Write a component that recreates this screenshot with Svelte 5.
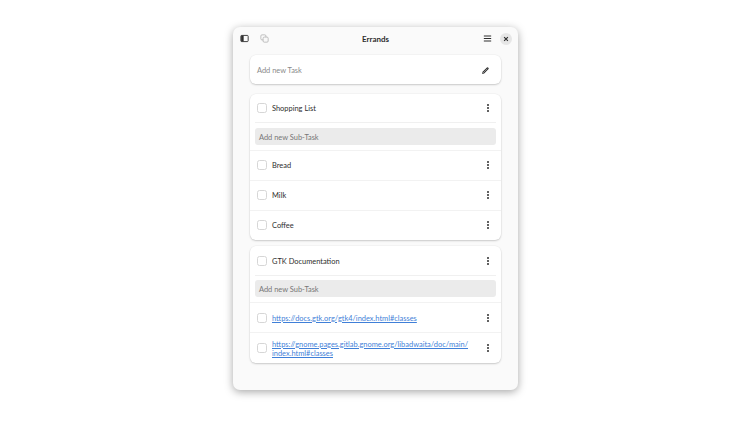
<script>
  const tasks = [
    {
      title: 'Shopping List',
      subs: [{ text: 'Bread' }, { text: 'Milk' }, { text: 'Coffee' }]
    },
    {
      title: 'GTK Documentation',
      subs: [
        { text: 'https://docs.gtk.org/gtk4/index.html#classes', link: true },
        { text: 'https://gnome.pages.gitlab.gnome.org/libadwaita/doc/main/ index.html#classes', link: true, tall: true }
      ]
    }
  ];
</script>

<div class="page">
  <div class="window">
    <header>
      <div class="group">
        <svg class="icon" viewBox="0 0 16 16">
          <rect x="1.5" y="2.5" width="13" height="11" rx="1.5" fill="none" stroke="#2e2e2e" stroke-width="1.6" />
          <rect x="2" y="3" width="4.5" height="10" fill="#2e2e2e" />
        </svg>
        <svg class="icon dim" viewBox="0 0 16 16">
          <rect x="1.5" y="1.5" width="9" height="9" rx="2" fill="none" stroke="#2e2e2e" stroke-width="1.4" />
          <rect x="5.5" y="5.5" width="9" height="9" rx="2" fill="#f6f6f6" stroke="#2e2e2e" stroke-width="1.4" />
        </svg>
      </div>
      <div class="title">Errands</div>
      <div class="group right">
        <svg class="icon" viewBox="0 0 16 16">
          <path d="M1.5 3.5h13M1.5 8h13M1.5 12.5h13" stroke="#2e2e2e" stroke-width="1.8" fill="none" />
        </svg>
        <div class="close">
          <svg viewBox="0 0 8 8"><path d="M1.5 1.5l5 5M6.5 1.5l-5 5" stroke="#2e2e2e" stroke-width="1.5" fill="none" /></svg>
        </div>
      </div>
    </header>

    <main>
      <div class="card new-task">
        <span class="placeholder">Add new Task</span>
        <svg class="icon" viewBox="0 0 16 16">
          <path d="M2 14l.8-3.6L10.6 2.6a1.3 1.3 0 0 1 1.8 0l1 1a1.3 1.3 0 0 1 0 1.8L5.6 13.2z" fill="#2e2e2e" />
          <path d="M3.6 12.4l7.6-7.6" stroke="#fff" stroke-width=".8" />
        </svg>
      </div>

      {#each tasks as task, i}
        <div class="card" class:first={i === 0} class:second={i === 1}>
          <div class="row top">
            <span class="check"></span>
            <span class="label">{task.title}</span>
            <span class="dots"><i></i><i></i><i></i></span>
          </div>
          <div class="entry-wrap">
            <div class="entry">Add new Sub-Task</div>
          </div>
          {#each task.subs as sub}
            <div class="row sub" class:tall={sub.tall}>
              <span class="check"></span>
              <span class="label" class:link={sub.link}>{sub.text}</span>
              <span class="dots"><i></i><i></i><i></i></span>
            </div>
          {/each}
        </div>
      {/each}
    </main>
  </div>
</div>

<style>
  :global(body) {
    margin: 0;
    background: #fff;
  }

  .page {
    padding: 27px 0 33px 233px;
    font-family: Lato, 'Noto Sans', sans-serif;
    font-size: 7.45px;
    color: #2e2e2e;
  }

  .window {
    width: 285px;
    height: 363px;
    box-sizing: border-box;
    background: #fafafa;
    border-radius: 7px;
    box-shadow: 0 2px 9px rgba(0, 0, 0, 0.35);
  }

  header {
    height: 23px;
    display: flex;
    align-items: center;
    justify-content: space-between;
    padding: 0 6px 0 7px;
  }

  .group {
    display: flex;
    align-items: center;
    gap: 11px;
  }

  .right {
    gap: 8px;
  }

  .title {
    font-weight: 700;
    font-size: 8px;
    margin-right: 1px;
  }

  .icon {
    width: 9px;
    height: 9px;
    flex: none;
  }

  .dim {
    opacity: 0.35;
  }

  .close {
    width: 12px;
    height: 12px;
    border-radius: 50%;
    background: #e6e6e6;
    display: flex;
    align-items: center;
    justify-content: center;
  }

  .close svg {
    width: 6px;
    height: 6px;
  }

  main {
    padding: 5px 17px 0;
    display: flex;
    flex-direction: column;
    gap: 10px;
  }

  .card {
    background: #fff;
    border-radius: 6px;
    box-shadow: 0 0 0 0.5px rgba(0, 0, 0, 0.04), 0 1px 2px rgba(0, 0, 0, 0.18);
  }

  .second {
    margin-top: -4px;
  }

  .new-task {
    height: 29px;
    display: flex;
    align-items: center;
    justify-content: space-between;
    padding: 1px 11px 0 7px;
    box-sizing: border-box;
  }

  .placeholder {
    color: #8a8a8a;
  }

  .row {
    display: flex;
    align-items: center;
    padding: 0 9px 0 7px;
    box-sizing: border-box;
  }

  .top {
    height: 28px;
  }

  .second .top {
    height: 29px;
  }

  .sub {
    height: 30px;
    border-top: 1px solid #f2f2f2;
  }

  .first .sub {
    padding-bottom: 1px;
  }

  .tall {
    height: 31px;
  }

  .check {
    width: 8px;
    height: 8px;
    border: 1px solid #d6d6d6;
    border-radius: 2.5px;
    flex: none;
  }

  .label {
    flex: 1;
    min-width: 0;
    margin-left: 5px;
    padding-top: 1px;
    line-height: 9px;
  }

  .link {
    color: #3f7fd8;
    text-decoration: underline;
    padding-right: 12px;
  }

  .dots {
    width: 2px;
    display: flex;
    flex-direction: column;
    gap: 1px;
    margin-right: 3px;
    flex: none;
  }

  .dots i {
    width: 2px;
    height: 2px;
    border-radius: 50%;
    background: #2e2e2e;
  }

  .entry-wrap {
    margin: 0 5px;
    padding-top: 5px;
    border-top: 1px solid #f0f0f0;
    height: 28px;
    box-sizing: border-box;
  }

  .second .entry-wrap {
    height: 27px;
    padding-top: 4px;
  }

  .entry {
    height: 17px;
    box-sizing: border-box;
    background: #ebebeb;
    border-radius: 3px;
    padding: 1px 4px 0;
    display: flex;
    align-items: center;
    color: #777;
  }
</style>
